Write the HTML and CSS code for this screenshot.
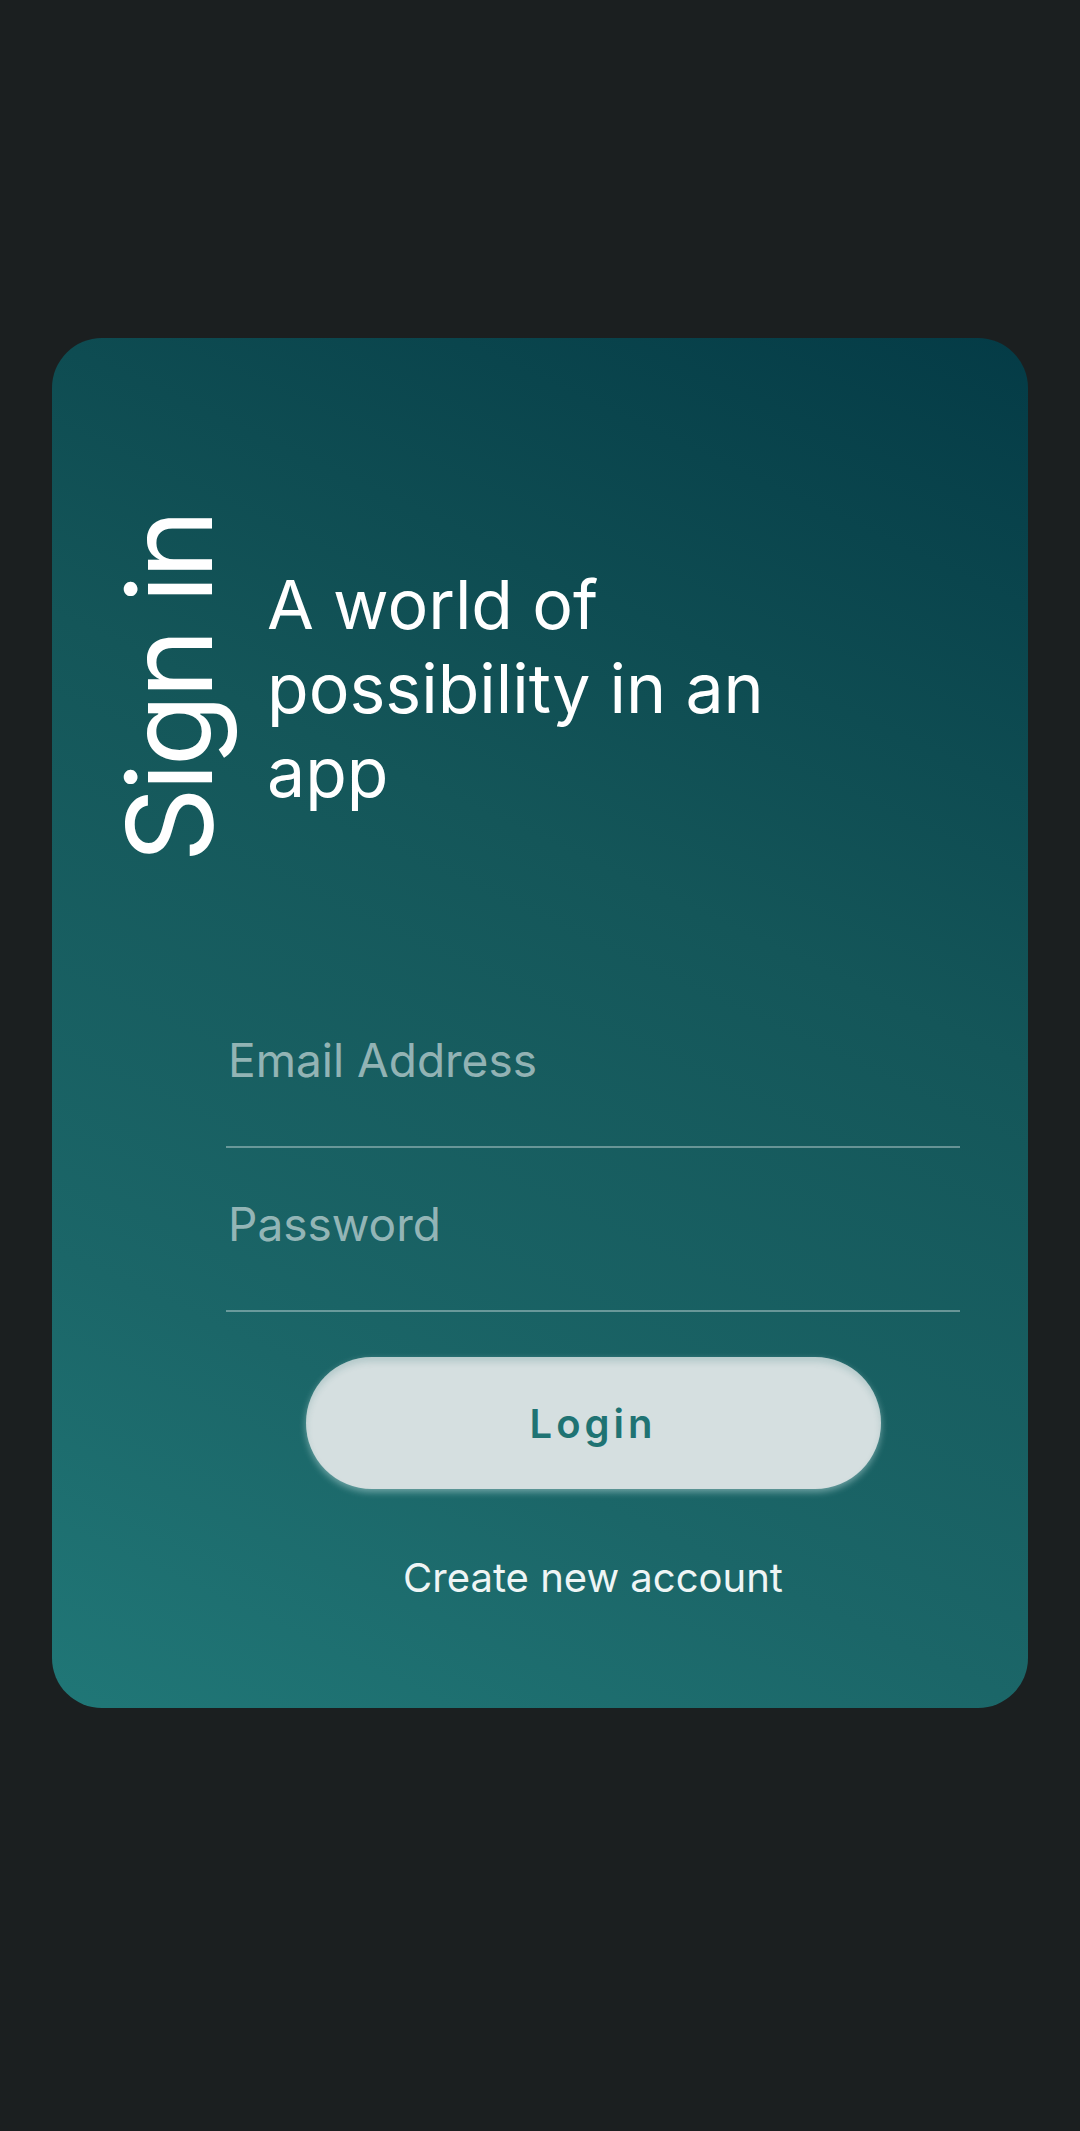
FILE: index.html
```html
<!DOCTYPE html>
<html lang="en">
<head>
<meta charset="utf-8">
<title>Sign in</title>
<link rel="stylesheet" href="styles.css">
</head>
<body>
<main class="page">
  <section class="card">
    <div class="intro">
      <h1 class="sign">Sign in</h1>
      <p class="tagline">A world of possibility in an app</p>
    </div>
    <form class="form">
      <input class="field" type="email" placeholder="Email Address">
      <input class="field field-gap" type="password" placeholder="Password">
      <button class="login" type="button">Login</button>
      <a class="create" href="#">Create new account</a>
    </form>
  </section>
</main>
</body>
</html>
```

FILE: styles.css
```css
* { box-sizing: border-box; }

html, body {
  margin: 0;
  padding: 0;
  background: #1b1f20;
}

body {
  font-family: Inter, "Noto Sans", "Liberation Sans", sans-serif;
  color: #ffffff;
  min-height: 2131px;
}

.page {
  padding: 338px 52px 0 52px;
}

.card {
  height: 1370px;
  border-radius: 50px;
  background: linear-gradient(205deg, #043b46 0%, #145659 40%, #1b6668 75%, #207777 100%);
  padding: 170px 68px 0 58px;
  display: flex;
  flex-direction: column;
}

.intro {
  height: 360px;
  display: flex;
  align-items: center;
  gap: 39px;
}

.sign {
  margin: 0;
  writing-mode: vertical-rl;
  transform: rotate(180deg);
  font-size: 118px;
  line-height: 118px;
  font-weight: 400;
  letter-spacing: -4px;
  white-space: nowrap;
  color: #ffffff;
}

.tagline {
  margin: 0;
  width: 560px;
  font-size: 68px;
  line-height: 84px;
  font-weight: 400;
  color: #ffffff;
}

.form {
  margin: 140px 0 0 116px;
  display: flex;
  flex-direction: column;
  align-items: center;
}

.field {
  width: 100%;
  display: block;
  background: transparent;
  border: 0;
  border-bottom: 2px solid rgba(255, 255, 255, 0.35);
  border-radius: 0;
  outline: none;
  padding: 24px 0 58px 2px;
  font-family: Inter, "Noto Sans", "Liberation Sans", sans-serif;
  font-size: 46px;
  line-height: 56px;
  height: 140px;
  color: #ffffff;
}

.field::placeholder {
  color: rgba(255, 255, 255, 0.55);
}

.field-gap {
  margin-top: 24px;
}

.login {
  margin-top: 45px;
  width: 575px;
  height: 132px;
  border: 0;
  border-radius: 66px;
  background: #d5dfe0;
  box-shadow: 0 3px 7px rgba(215, 240, 240, 0.45), inset 0 5px 6px rgba(40, 110, 110, 0.18);
  font-family: Inter, "Noto Sans", "Liberation Sans", sans-serif;
  font-size: 40px;
  font-weight: 600;
  letter-spacing: 4px;
  color: #1f7373;
  cursor: pointer;
}

.create {
  margin-top: 65px;
  font-size: 40px;
  line-height: 48px;
  color: #eef5f5;
  text-decoration: none;
}
```
